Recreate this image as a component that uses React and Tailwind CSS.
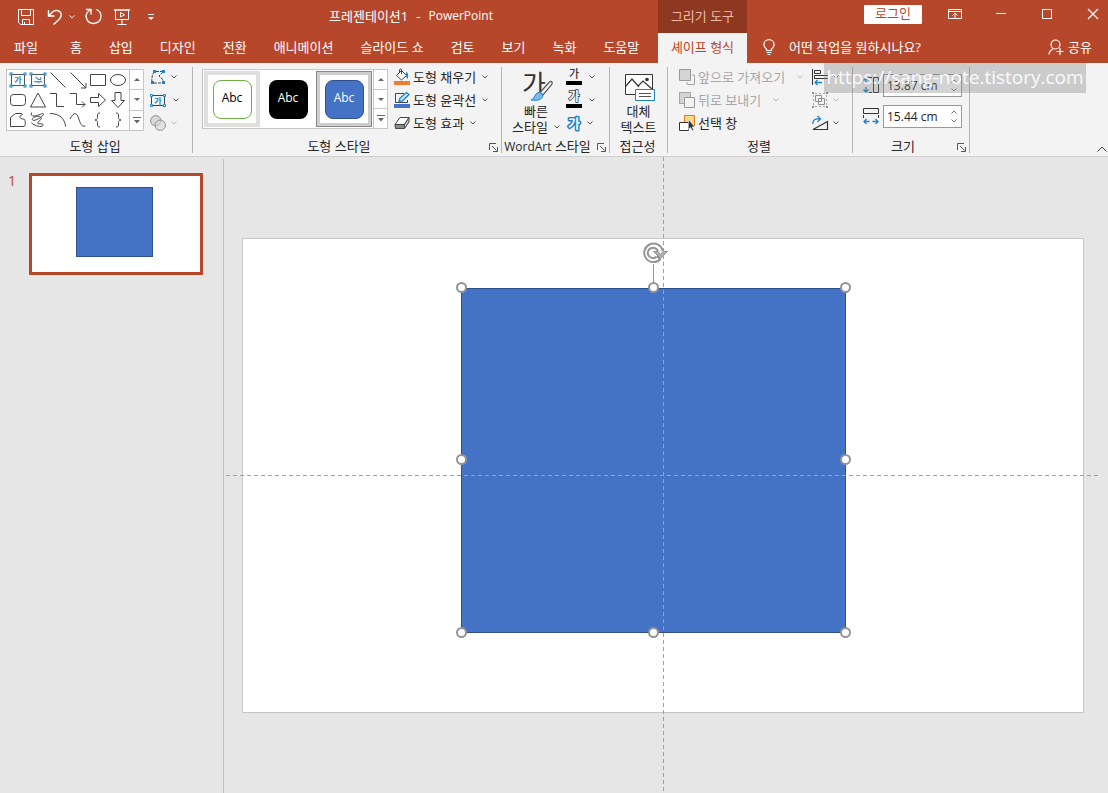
import clsx from "clsx";

const Svg = ({ w = 16, h = w, className, children }) => (
    <svg width={w} height={h} viewBox={`0 0 ${w} ${h}`} fill="none" stroke="currentColor" className={clsx("shrink-0 overflow-visible", className)} aria-hidden="true">
        {children}
    </svg>
);

const Chevron = ({ className }) => (
    <Svg w={6} h={4} className={className}><path d="M.5 .5L3 3L5.5 .5" /></Svg>
);

/* Title bar */
const SaveIcon = () => (
    <Svg><path d="M.5 .5h15v15h-13l-2-2zM3.5 .5v6h9v-6M4.5 15.5v-5h7v5M6.5 13v2.5" /></Svg>
);
const UndoIcon = () => (
    <Svg><path d="M1.5 1v6h6M1.8 6.8L5.5 3c3-2.800 8-1.500 8.700 2.200c.4 2.300-.7 3.700-2 5L6.500 15.500" strokeWidth="1.4" /></Svg>
);
const RedoIcon = () => (
    <Svg w={17}><path d="M1 1.500h5v5M5.600 2C2 3.700 .6 7 1.400 10c1 3.500 4 5.500 7.300 5.500c4 0 7-3 7.300-6.800c.2-3.400-1.800-6-4.700-7.200" strokeWidth="1.300" /></Svg>
);
const SlideShowIcon = () => (
    <Svg><path d="M0 1h16" strokeWidth="1.500" /><path d="M1.500 1v9.500h13V1M8 10.500v5M3.500 15.500h9M6.500 3.500v4.500l4-2.200z" /></Svg>
);
const RibbonModeIcon = () => (
    <Svg h={12}><path d="M1.500 1.500h13v9h-13zM1.500 3.500h13M8 10V5.500M5.500 7.500L8 5l2.500 2.500" /></Svg>
);
const MinimizeIcon = () => <Svg h={12}><path d="M3 5.500h10" /></Svg>;
const MaximizeIcon = () => <Svg h={12}><path d="M3.500 1.500h9v9h-9z" /></Svg>;
const CloseIcon = () => <Svg h={12}><path d="M3 1l10 10M13 1L3 11" strokeWidth="1.200" /></Svg>;
const BulbIcon = () => (
    <Svg w={12} h={16}><path d="M3.500 11.500v-1.500C1.800 8.800 .9 7.500 .9 5.600C.9 2.800 3.200 .7 6 .7s5.100 2.100 5.100 4.900c0 1.900-.9 3.200-2.600 4.400v1.500zM3.500 13.500h5M4.500 15.500h3" strokeWidth="1.200" /></Svg>
);
const ShareIcon = () => (
    <Svg><circle cx="7.500" cy="5.500" r="4.500" strokeWidth="1.200" /><path d="M1 15.500c.3-3 2-4.800 4.500-5.700M12 9v7M8.500 12.500H15.500" strokeWidth="1.200" /></Svg>
);

/* Shape gallery */
const TextBox = ({ vertical }) => (
    <>
        <path d="M3.500 4.500h13v11h-13z" stroke="#555" />
        {[[3, 4], [17, 4], [3, 16], [17, 16]].map(([x, y]) => (
            <rect key={`${x}${y}`} x={x - 1} y={y - 1} width="2" height="2" fill="#fff" stroke="#1b84c8" />
        ))}
        <text x="10" y="13" fontSize="8" fontWeight="700" textAnchor="middle" fill="#1b84c8" stroke="none" transform={vertical ? "rotate(90 10 10)" : undefined}>가</text>
    </>
);

const shapes = [
    ["텍스트 상자", <TextBox />],
    ["세로 텍스트 상자", <TextBox vertical />],
    ["선", <path d="M2.500 2.500l15 15" />],
    ["화살표", <path d="M2.500 2.500l15 15M18 13v5h-5" />],
    ["직사각형", <path d="M2.500 4.500h15v11h-15z" />],
    ["타원", <ellipse cx="10" cy="10" rx="7.500" ry="5.500" />],
    ["둥근 직사각형", <rect x="2.500" y="4.500" width="15" height="11" rx="3" />],
    ["삼각형", <path d="M10 3l7.500 14h-15z" />],
    ["꺾인 연결선", <path d="M2 3.500h6.500v13H16" />],
    ["꺾인 화살표 연결선", <path d="M2 3.500h6.500v11H17M14 11.500l3 3l-3 3" />],
    ["오른쪽 화살표", <path d="M2.500 7.500h8v-4l7 6.500l-7 6.500v-4h-8z" />],
    ["아래쪽 화살표", <path d="M7 2.500h6v8h3.500L10 17.500L3.500 10.500H7z" />],
    ["자유형 도형", <path d="M2.500 16.500v-9l5-4h6l1 1c-5 2-2 5 1.500 4.500c2 1 1.500 7.500 0 7.500z" />],
    ["자유 곡선", <path d="M3.500 2.500c-1 2.500 0 3.500 2.500 3.500c5 0 9-4 9.500-2c.4 2-9 8-11 6c-1.500-2 5-5 8-3c2 2-1 4-2.500 5c-1.500 2.500 2 1.500 4.500 2c1.800 1-.3 3-3 2.500C7 15.500 4 14 3.500 12.500" />],
    ["호", <path d="M2 3.500c9 0 15 5 15.500 13" />],
    ["곡선", <path d="M2 9c4-8 7-6 8.500-1c2 6 3 9 7 8" />],
    ["왼쪽 중괄호", <path d="M12 3c-2.500 0-2.500 1-2.500 3c0 2.500 0 3.500-2.500 4c2.500 .5 2.500 1.500 2.500 4c0 2 0 3 2.500 3" />],
    ["오른쪽 중괄호", <path d="M8 3c2.500 0 2.500 1 2.500 3c0 2.500 0 3.500 2.500 4c-2.500 .5-2.500 1.500-2.500 4c0 2 0 3-2.500 3" />],
];

const EditShapeIcon = () => (
    <Svg>
        <path d="M4 2.500C2 6 1.500 10 2 14M13 3l-4 4l4 3.500V14M4 14h7M6 2.500h6" stroke="#444" strokeDasharray="3 1" />
        <g fill="#1b84c8" stroke="none"><path d="M3 1h3v3H3zM12 1h3v3h-3zM1 12h3v3H1zM12 12h3v3h-3z" /></g>
    </Svg>
);
const TextBoxIcon = () => (
    <Svg>
        <path d="M1.500 3.500h13v10h-13z" stroke="#444" />
        <g fill="#fff" stroke="#1b84c8"><path d="M.5 2.500h2v2h-2zM13.500 2.500h2v2h-2zM.5 12.500h2v2h-2zM13.500 12.500h2v2h-2z" /></g>
        <text x="8" y="11.500" fontSize="8" fontWeight="700" textAnchor="middle" fill="#1b84c8" stroke="none">가</text>
    </Svg>
);
const MergeShapesIcon = () => (
    <Svg><g fill="#d8d8d8" stroke="#8f8f8f"><circle cx="5.800" cy="5.800" r="5.200" /><circle cx="10.200" cy="10.200" r="5.200" fillOpacity=".6" /></g></Svg>
);

/* Shape styles */
const FillIcon = () => (
    <Svg>
        <path d="M2.500 6.500L7.500 1.500l5 5l-5 4.500z" fill="#fff" stroke="#444" />
        <path d="M7.500 5V1c0-1.200-2-1.200-2 0v2" stroke="#444" />
        <path d="M12 3c2.500 .5 2.500 4 1.500 7c-1.500-1-1.500-4-1.500-7z" fill="#1b84c8" stroke="none" />
        <path d="M0 12h16v4H0z" fill="#ed7d31" stroke="none" />
    </Svg>
);
const OutlineIcon = () => (
    <Svg>
        <path d="M10 1.500H1.500v9h12V8" stroke="#444" />
        <path d="M5 9.500l1-3.500L12.500 .5l2.500 2L8.500 8.800z" fill="#cfe6f7" stroke="#1b84c8" strokeWidth="1.300" />
        <path d="M0 12h16v4H0z" fill="#4472c4" stroke="none" />
    </Svg>
);
const EffectIcon = () => (
    <Svg>
        <path d="M1 9.500L6 2.500h9L10.500 9.500z" fill="#fff" stroke="#444" />
        <path d="M1 9.500h9.500v4h-9z" fill="#8a8a8a" stroke="#444" />
        <path d="M10.500 9.500L15 2.500V7l-4.500 6.500z" fill="#c8c8c8" stroke="#444" />
    </Svg>
);

/* WordArt */
const QuickStyleIcon = () => (
    <Svg w={32}>
        <text x="0" y="23" fontSize="26" fill="#333" stroke="none">가</text>
        <path d="M29.500 10.500c1.500 1 .5 2.500-.5 4L21 24l-3-2.500L27 11.500c.8-1 1.700-1.500 2.500-1z" fill="#f5f5f5" stroke="#555" strokeWidth="1.200" />
        <path d="M17.500 21.500c2 .3 3.500 2 3 4c-.8 3-4.500 4.500-11.500 3.500c2.500-1 3-2.500 4-4.500s2.500-3.200 4.500-3z" fill="#7db8e8" stroke="#1b84c8" />
    </Svg>
);
const TextFillIcon = () => (
    <Svg>
        <text x="8" y="9" fontSize="11" fontWeight="500" textAnchor="middle" fill="#333" stroke="none">가</text>
        <path d="M0 12h16v4H0z" fill="#000" stroke="none" />
    </Svg>
);
const TextOutlineIcon = () => (
    <Svg>
        <text x="8" y="9" fontSize="12" fontWeight="700" textAnchor="middle" fill="#fff" stroke="#333" strokeWidth="1.500" paintOrder="stroke">가</text>
        <path d="M0 12h16v4H0z" fill="#000" stroke="none" />
    </Svg>
);
const TextEffectIcon = () => (
    <Svg>
        <text x="8" y="13" fontSize="13" fontWeight="700" textAnchor="middle" fill="#fff" stroke="#1b7fce" strokeWidth="3" strokeLinejoin="round" paintOrder="stroke">가</text>
    </Svg>
);

const AltTextIcon = () => (
    <Svg w={32} h={28}>
        <path d="M2.500 1.500h27v20h-27z" fill="#fff" stroke="#333" />
        <path d="M2.500 13.500L9 6l7 8M15 13l5-5l9 8" stroke="#333" strokeWidth="1.200" />
        <circle cx="24" cy="6.500" r="1.800" fill="#333" stroke="none" />
        <path d="M12.500 16.500h19v11h-19z" fill="#fff" stroke="#1b84c8" />
        <path d="M16 20.500h12M16 23.500h12" stroke="#555" />
    </Svg>
);

/* Arrange */
const ForwardIcon = () => (
    <Svg><path d="M8 13v2.500h7.500V6H13" /><path d="M.5 .5h11v11H.5z" fill="#d4d4d4" stroke="#9a9a9a" /></Svg>
);
const BackwardIcon = () => (
    <Svg><path d="M.5 .5h11v11H.5z" fill="#d4d4d4" /><path d="M5.500 5.500h10v10h-10z" fill="#f3f3f3" stroke="#9a9a9a" /></Svg>
);
const SelectionIcon = () => (
    <Svg>
        <path d="M5.500 .5h10v10h-10z" fill="#f9d88c" stroke="#e07b1a" />
        <path d="M.5 7.500h9v8h-9z" fill="#fff" stroke="#333" />
        <path d="M9.500 4.500v10l2.200-2l1.500 3.200l1.500-.8l-1.500-3h2.600z" fill="#333" stroke="#f3f3f3" strokeWidth=".6" />
    </Svg>
);
const AlignIcon = () => (
    <Svg>
        <path d="M.5 0v16M2.500 1.500h6v3h-6zM16 6.500H2.500v3H16" stroke="#333" />
        <path d="M10 13.500H3M5.500 11L3 13.500L5.500 16" stroke="#1b84c8" strokeWidth="1.300" />
    </Svg>
);
const GroupIcon = () => (
    <Svg>
        <path d="M3 1.500h10M3 14.500h10M1.500 3v10M14.500 3v10" strokeDasharray="2 2" />
        <path d="M3.500 3.500h6v6h-6zM6.500 6.500h6v6h-6z" stroke="#8f8f8f" />
        <path d="M0 0h2v2H0zM14 0h2v2h-2zM0 14h2v2H0zM14 14h2v2h-2z" fill="#8f8f8f" stroke="none" />
    </Svg>
);
const RotateIcon = () => (
    <Svg>
        <path d="M1 14.500h14.500v-8z" stroke="#333" strokeWidth="1.200" />
        <path d="M.8 9C.5 5 3 3.500 8 4M5.500 1L8.500 4L5.500 7" stroke="#1b84c8" strokeWidth="1.300" />
    </Svg>
);

/* Size */
const HeightIcon = () => (
    <Svg w={17}>
        <path d="M10.500 .5h5v15h-5zM5 .5h4M6 15.500h3" stroke="#333" />
        <path d="M3 1v5M3 10v5M.5 3.500L3 1l2.500 2.500M.5 12.500L3 15l2.500-2.500" stroke="#1b84c8" strokeWidth="1.300" />
    </Svg>
);
const WidthIcon = () => (
    <Svg w={17}>
        <path d="M.5 .5h15v5H.5zM.5 7v3M15.500 7v3" stroke="#333" />
        <path d="M1 13.500h5.500M9.500 13.500H15M3.500 11L1 13.500L3.500 16M12.500 11L15 13.500L12.500 16" stroke="#1b84c8" strokeWidth="1.300" />
    </Svg>
);

const tabs = ["삽입", "디자인", "전환", "애니메이션", "슬라이드 쇼", "검토", "보기", "녹화", "도움말"];

const Header = () => (
    <header className="flex h-[63px] bg-[#b7472a] text-white">
        <div className="w-[658px] shrink-0">
            <div className="flex h-[33px] items-center">
                <div className="flex w-[164px] items-center pl-[18px]">
                    <button aria-label="저장"><SaveIcon /></button>
                    <button aria-label="실행 취소" className="ml-[13px]"><UndoIcon /></button>
                    <button aria-label="실행 취소 목록" className="ml-1.5"><Chevron /></button>
                    <button aria-label="다시 실행" className="ml-2.5"><RedoIcon /></button>
                    <button aria-label="슬라이드 쇼 시작" className="ml-3"><SlideShowIcon /></button>
                    <button aria-label="빠른 실행 도구 모음 사용자 지정" className="ml-[18px]">
                        <Svg w={6} h={6}><path d="M0 .5h6" /><path d="M0 3h6L3 6z" fill="currentColor" stroke="none" /></Svg>
                    </button>
                </div>
                <h1 className="flex flex-1 items-center justify-center gap-2 pb-0.5">
                    <span>프레젠테이션1</span><span>-</span><span className="text-xs">PowerPoint</span>
                </h1>
            </div>
            <nav className="flex h-7 items-center pl-3.5">
                <button>파일</button>
                <button className="ml-8">홈</button>
                <div className="ml-[27px] flex gap-[27px]">
                    {tabs.map((tab) => <button key={tab}>{tab}</button>)}
                </div>
            </nav>
        </div>
        <div className="w-[89px] shrink-0">
            <div className="flex h-[33px] items-center justify-center bg-[#8f3821] pb-0.5 text-[#f0b8a5]">그리기 도구</div>
            <button className="h-[30px] w-full bg-[#f3f3f3] pb-0.5 text-[#b7472a]">셰이프 형식</button>
        </div>
        <div className="min-w-0 flex-1">
            <div className="flex h-7 items-center justify-end gap-[25px] pr-[7px]">
                <button className="flex h-[19px] w-[58px] items-center justify-center rounded-[1px] bg-white pb-0.5 text-[#b7472a]">로그인</button>
                <div className="flex items-center gap-[30px]">
                    <button aria-label="리본 메뉴 표시 옵션"><RibbonModeIcon /></button>
                    <button aria-label="최소화"><MinimizeIcon /></button>
                    <button aria-label="최대화"><MaximizeIcon /></button>
                    <button aria-label="닫기"><CloseIcon /></button>
                </div>
            </div>
            <div className="flex h-[38px] items-center justify-between pr-4 pl-4">
                <button className="flex items-center gap-3.5"><BulbIcon />어떤 작업을 원하시나요?</button>
                <button className="flex items-center gap-1"><ShareIcon />공유</button>
            </div>
        </div>
    </header>
);

const Launcher = () => (
    <button aria-label="자세히" className="absolute right-[3px] bottom-1">
        <Svg w={9}><path d="M.5 7V.5H7M3 3l4.500 4.500M8.500 4v4.500H4" stroke="#555" /></Svg>
    </button>
);

const Group = ({ label, launcher, className, children }) => (
    <section className={clsx("relative flex shrink-0 flex-col", className)}>
        <div className="flex h-[74px]">{children}</div>
        <div className={clsx("h-5 text-center whitespace-nowrap", launcher ? "pr-4" : "pr-0.5")}>{label}</div>
        {launcher && <Launcher />}
    </section>
);

const Divider = () => <div className="mt-1 h-[86px] w-px shrink-0 bg-[#b4b4b4]" />;

const GalleryScroll = () => (
    <div className="flex w-3.5 flex-col divide-y divide-[#c6c6c6] border-l border-[#c6c6c6] text-[#666]">
        <button aria-label="위로" className="flex flex-1 items-center justify-center">
            <Svg w={6} h={3}><path d="M0 3h6L3 0z" fill="currentColor" stroke="none" /></Svg>
        </button>
        <button aria-label="아래로" className="flex flex-1 items-center justify-center">
            <Svg w={6} h={3}><path d="M0 0h6L3 3z" fill="currentColor" stroke="none" /></Svg>
        </button>
        <button aria-label="더 보기" className="flex flex-1 items-center justify-center">
            <Svg w={8} h={7}><path d="M0 .5h8" /><path d="M1 3h6L4 6.500z" fill="currentColor" stroke="none" /></Svg>
        </button>
    </div>
);

const Command = ({ icon, label, disabled, wide }) => (
    <button disabled={disabled} className={clsx("flex h-[23px] items-center whitespace-nowrap", disabled && "text-[#a6a6a6]")}>
        {icon}
        {label && <span className="ml-[3px]">{label}</span>}
        {wide !== undefined && <Chevron className={clsx(wide, disabled ? "text-[#b8b8b8]" : "text-[#555]")} />}
    </button>
);

const styles = [
    { name: "윤곽선", frame: "border-4 border-[#e1dfdd]", swatch: "border border-[#70ad47] bg-white text-black" },
    { name: "채우기 검정", frame: "border-4 border-transparent", swatch: "bg-black text-white" },
    { name: "채우기 파랑", frame: "border-4 border-[#cfcdcb] outline outline-[#8a8886] -outline-offset-1", swatch: "border border-[#2f528f] bg-[#4472c4] text-white" },
];

const SizeField = ({ id, label, icon, value }) => (
    <div className="flex items-center gap-[3px]">
        <label htmlFor={id} aria-label={label}>{icon}</label>
        <div className="flex h-[23px] w-[79px] border border-[#999] bg-white">
            <input id={id} defaultValue={value} className="w-[62px] min-w-0 pl-[3px] text-xs outline-none" />
            <div className="flex flex-1 flex-col items-center justify-between py-1 text-[#777]">
                <button aria-label={`${label} 늘리기`}><Chevron className="block rotate-180" /></button>
                <button aria-label={`${label} 줄이기`}><Chevron className="block" /></button>
            </div>
        </div>
    </div>
);

const Ribbon = () => (
    <div className="relative flex h-[94px] border-b border-[#d0d0d0] bg-[#f3f3f3] text-[#262626]">
        <Group label="도형 삽입" className="w-48">
            <div className="mt-1.5 ml-1.5 flex h-[62px] border border-[#c6c6c6] bg-white">
                <div className="grid grid-cols-6 px-px text-[#444]">
                    {shapes.map(([name, shape]) => (
                        <button key={name} aria-label={name} className="size-5"><Svg w={20}>{shape}</Svg></button>
                    ))}
                </div>
                <GalleryScroll />
            </div>
            <div className="mt-0.5 ml-1.5">
                <Command icon={<EditShapeIcon />} wide="ml-[5px]" />
                <Command icon={<TextBoxIcon />} wide="ml-[7px]" />
                <Command icon={<MergeShapesIcon />} disabled wide="ml-[5px]" />
            </div>
        </Group>
        <Divider />
        <Group label="도형 스타일" launcher className="w-[308px]">
            <div className="mt-1.5 ml-[9px] flex h-[60px] border border-[#c6c6c6] bg-white">
                <div className="flex items-center px-px">
                    {styles.map(({ name, frame, swatch }) => (
                        <button key={name} aria-label={name} className={clsx("flex size-14 items-center justify-center", frame)}>
                            <span className={clsx("flex size-[39px] items-center justify-center rounded-lg pb-0.5 text-xs", swatch)}>Abc</span>
                        </button>
                    ))}
                </div>
                <GalleryScroll />
            </div>
            <div className="mt-0.5 ml-1.5">
                <Command icon={<FillIcon />} label="도형 채우기" wide="ml-1.5" />
                <Command icon={<OutlineIcon />} label="도형 윤곽선" wide="ml-1.5" />
                <Command icon={<EffectIcon />} label="도형 효과" wide="ml-1.5" />
            </div>
        </Group>
        <Divider />
        <Group label={<><span className="text-xs">WordArt</span> 스타일</>} launcher className="w-[107px]">
            <button className="ml-2.5 w-12 pt-1.5 leading-4">
                <span className="flex justify-center pl-1"><QuickStyleIcon /></span>
                <span className="block">빠른</span>
                <span className="flex items-center gap-1.5 whitespace-nowrap">스타일<Chevron className="text-[#555]" /></span>
            </button>
            <div className="mt-0.5 ml-1.5">
                <Command icon={<TextFillIcon />} wide="ml-[7px]" />
                <Command icon={<TextOutlineIcon />} wide="ml-[7px]" />
                <Command icon={<TextEffectIcon />} wide="ml-[5px]" />
            </div>
        </Group>
        <Divider />
        <Group label="접근성" className="w-[57px]">
            <button className="flex w-full flex-col items-center pt-2.5 leading-4">
                <AltTextIcon />
                <span className="mt-0.5">대체</span>
                <span>텍스트</span>
            </button>
        </Group>
        <Divider />
        <Group label="정렬" className="w-[184px]">
            <div className="mt-0.5 ml-[11px] w-[133px]">
                <Command icon={<ForwardIcon />} label="앞으로 가져오기" disabled wide="ml-3" />
                <Command icon={<BackwardIcon />} label="뒤로 보내기" disabled wide="ml-3" />
                <Command icon={<SelectionIcon />} label="선택 창" />
            </div>
            <div className="mt-0.5">
                <Command icon={<AlignIcon />} wide="ml-[5px]" />
                <Command icon={<GroupIcon />} disabled wide="ml-[5px]" />
                <Command icon={<RotateIcon />} wide="ml-[5px]" />
            </div>
        </Group>
        <Divider />
        <Group label="크기" launcher className="w-[116px]">
            <div className="mt-[11px] ml-2.5 flex flex-col gap-2">
                <SizeField id="shape-height" label="높이" icon={<HeightIcon />} value="13.87 cm" />
                <SizeField id="shape-width" label="너비" icon={<WidthIcon />} value="15.44 cm" />
            </div>
        </Group>
        <Divider />
        <button aria-label="리본 메뉴 축소" className="mt-auto mr-px mb-1 ml-auto">
            <Svg w={10} h={6}><path d="M.5 5.500L5 1l4.500 4.500" stroke="#444" /></Svg>
        </button>
        <div className="absolute top-0 right-[22px] flex h-[30px] w-[262px] items-center justify-center bg-[#808080]/35 pb-0.5 text-[19px] font-medium text-white/90">
            https://sang-note.tistory.com
        </div>
    </div>
);

const Handle = ({ className }) => (
    <span className={clsx("absolute -mt-[5px] -ml-[5px] size-[11px] rounded-full border-2 border-[#949494] bg-white", className)} />
);

const Editor = () => (
    <main className="relative flex-1 pt-[81px] pr-6 pl-[18px]">
        <div className="relative aspect-[842/475] w-full border border-[#c6c6c6] bg-white">
            <div className="absolute top-[49px] left-[218px] h-[345px] w-[385px] border border-[#2f528f] bg-[#4472c4]">
                <div className="absolute -top-[25px] left-[191px] h-6 w-px bg-[#949494]" />
                <Svg w={28} h={22} className="absolute -top-[47px] left-[180px]">
                    <path d="M18.500 17A9.300 9.300 0 1 1 20.700 9" stroke="#949494" strokeWidth="2" />
                    <path d="M14.500 14.800A5.200 5.200 0 1 1 16 9.500" stroke="#949494" strokeWidth="2" />
                    <path d="M18.700 17.300L14.800 14.200" stroke="#949494" strokeWidth="2" />
                    <path d="M11.500 9.500h4.500l2.500 3l2.500-3h4.500l-7 7z" fill="#b0b0b0" stroke="#949494" />
                </Svg>
            </div>
        </div>
        <div className="absolute top-0 bottom-0.5 left-[439px] w-px bg-[repeating-linear-gradient(to_bottom,#a0a0a0_0_4px,transparent_4px_7px)]" />
        <div className="absolute top-[318px] right-[9px] left-0.5 h-px bg-[repeating-linear-gradient(to_right,#a0a0a0_0_4px,transparent_4px_7px)]" />
        <div className="absolute top-[130px] left-[237px] h-[345px] w-[384px]">
            <Handle className="top-0 left-0" />
            <Handle className="top-0 left-1/2" />
            <Handle className="top-0 left-full" />
            <Handle className="top-[172px] left-0" />
            <Handle className="top-[172px] left-full" />
            <Handle className="top-full left-0" />
            <Handle className="top-full left-1/2" />
            <Handle className="top-full left-full" />
        </div>
    </main>
);

export default function App() {
    return (
        <div className="flex min-h-screen flex-col bg-[#e6e6e6] font-['Open_Sans','Noto_Sans_CJK_KR',sans-serif] text-[13px] leading-5">
            <Header />
            <Ribbon />
            <div className="flex flex-1">
                <aside className="mt-0.5 flex w-56 shrink-0 items-start border-r border-[#c0c0c0] pt-3.5 pl-2">
                    <span className="w-[21px] text-sm leading-4 text-[#c5432a]">1</span>
                    <button aria-label="슬라이드 1" className="flex h-[102px] w-[174px] items-start border-[3px] border-[#b7472a] bg-white pt-[11px] pl-11">
                        <span className="h-[70px] w-[77px] border border-[#2f528f] bg-[#4472c4]" />
                    </button>
                </aside>
                <Editor />
            </div>
        </div>
    );
}
